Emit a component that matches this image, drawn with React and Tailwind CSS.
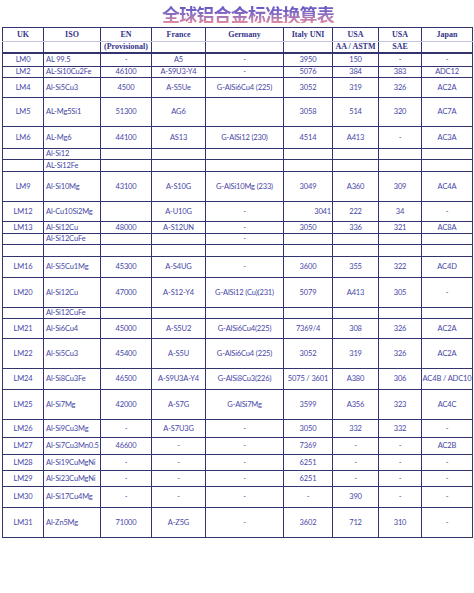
const cols = [41, 57, 51, 54, 78, 49, 46, 43, 51]

// [height, UK, ISO, EN, France, Germany, Italy, AA, SAE, Japan]
const rows = [
  [14, 'LM0', 'AL 99.5', '-', 'A5', '-', '3950', '150', '-', '-'],
  [11, 'LM2', 'AL-Si10Cu2Fe', '46100', 'A-S9U3-Y4', '-', '5076', '384', '383', 'ADC12'],
  [20, 'LM4', 'Al-Si5Cu3', '4500', 'A-S5Ue', 'G-AlSi6Cu4 (225)', '3052', '319', '326', 'AC2A'],
  [29, 'LM5', 'AL-Mg5Si1', '51300', 'AG6', '', '3058', '514', '320', 'AC7A'],
  [22, 'LM6', 'AL-Mg6', '44100', 'AS13', 'G-AlSi12 (230)', '4514', 'A413', '-', 'AC3A'],
  [11, '', 'Al-Si12', '', '', '', '', '', '', ''],
  [12, '', 'AL-Si12Fe', '', '', '', '', '', '', ''],
  [30, 'LM9', 'Al-Si10Mg', '43100', 'A-S10G', 'G-AlSi10Mg (233)', '3049', 'A360', '309', 'AC4A'],
  [20, 'LM12', 'Al-Cu10Si2Mg', '', 'A-U10G', '-', '3041', '222', '34', '-'],
  [12, 'LM13', 'Al-Si12Cu', '48000', 'A-S12UN', '-', '3050', '336', '321', 'AC8A'],
  [11, '', 'Al-Si12CuFe', '', '', '-', '', '', '', ''],
  [12, '', '', '', '', '', '', '', '', ''],
  [21, 'LM16', 'Al-Si5Cu1Mg', '45300', 'A-S4UG', '-', '3600', '355', '322', 'AC4D'],
  [30, 'LM20', 'Al-Si12Cu', '47000', 'A-S12-Y4', 'G-AlSi12 (Cu)(231)', '5079', 'A413', '305', '-'],
  [11, '', 'Al-Si12CuFe', '', '', '', '', '', '', ''],
  [20, 'LM21', 'Al-Si6Cu4', '45000', 'A-S5U2', 'G-AlSi6Cu4(225)', '7369/4', '308', '326', 'AC2A'],
  [30, 'LM22', 'Al-Si5Cu3', '45400', 'A-S5U', 'G-AlSi6Cu4 (225)', '3052', '319', '326', 'AC2A'],
  [21, 'LM24', 'Al-Si8Cu3Fe', '46500', 'A-S9U3A-Y4', 'G-AlSi8Cu3(226)', '5075 / 3601', 'A380', '306', 'AC4B / ADC10'],
  [30, 'LM25', 'Al-Si7Mg', '42000', 'A-S7G', 'G-AlSi7Mg', '3599', 'A356', '323', 'AC4C'],
  [18, 'LM26', 'Al-Si9Cu3Mg', '-', 'A-S7U3G', '-', '3050', '332', '332', '-'],
  [17, 'LM27', 'Al-Si7Cu3Mn0.5', '46600', '-', '-', '7369', '-', '-', 'AC2B'],
  [16, 'LM28', 'Al-Si19CuMgNi', '-', '-', '-', '6251', '-', '-', '-'],
  [16, 'LM29', 'Al-Si23CuMgNi', '-', '-', '-', '6251', '-', '-', '-'],
  [21, 'LM30', 'Al-Si17Cu4Mg', '-', '-', '-', '-', '390', '-', '-'],
  [30, 'LM31', 'Al-Zn5Mg', '71000', 'A-Z5G', '-', '3602', '712', '310', '-'],
]

const head1 = ['UK', 'ISO', 'EN', 'France', 'Germany', 'Italy UNI', 'USA', 'USA', 'Japan']
const head2 = ['', '', '(Provisional)', '', '', '', 'AA / ASTM', 'SAE', '']

export default function App() {
  return (
    <div className="w-[474px] h-[593px] bg-white overflow-hidden">
      <div className="h-[27px] flex items-center justify-center pl-[22px]">
        <h1
          className="text-[18px] font-bold leading-none tracking-[-0.8px] bg-gradient-to-b from-[#5a52c4] via-[#8a6cc0] to-[#e48aa0] bg-clip-text text-transparent"
          style={{ fontFamily: '"Noto Sans CJK SC", "Noto Sans", sans-serif' }}>
          全球铝合金标准换算表
        </h1>
      </div>
      <table
        className="ml-[2px] w-[471px] table-fixed border-collapse text-[7.5px] tracking-[-0.15px] leading-none text-[#4646a6]"
        style={{ fontFamily: 'Lato, "Open Sans", sans-serif' }}>
        <colgroup>
          {cols.map((w, i) => (
            <col key={i} style={{ width: w }} />
          ))}
        </colgroup>
        <thead className="font-bold text-[#34348a] text-[8px] tracking-normal" style={{ fontFamily: '"Liberation Serif", serif' }}>
          <tr className="h-[14px]">
            {head1.map((h, i) => (
              <th key={i} className="p-0 pt-[1px] text-center align-middle border-x border-t border-[#33336e] border-b border-b-[#c4c4e0]">
                {h}
              </th>
            ))}
          </tr>
          <tr className="h-[11px]">
            {head2.map((h, i) => (
              <th key={i} className="p-0 text-center align-middle border-x border-b-2 border-[#33336e]">
                {h}
              </th>
            ))}
          </tr>
        </thead>
        <tbody>
          {rows.map(([h, ...cells], r) => (
            <tr key={r} style={{ height: h }}>
              {cells.map((c, i) => (
                <td
                  key={i}
                  className={
                    'p-0 align-middle border border-[#33336e] whitespace-nowrap overflow-hidden ' +
                    (i === 1 ? 'text-left pl-[2px]' : r === 8 && i === 5 ? 'text-right pr-[1px]' : 'text-center')
                  }>
                  {c}
                </td>
              ))}
            </tr>
          ))}
        </tbody>
      </table>
    </div>
  )
}
